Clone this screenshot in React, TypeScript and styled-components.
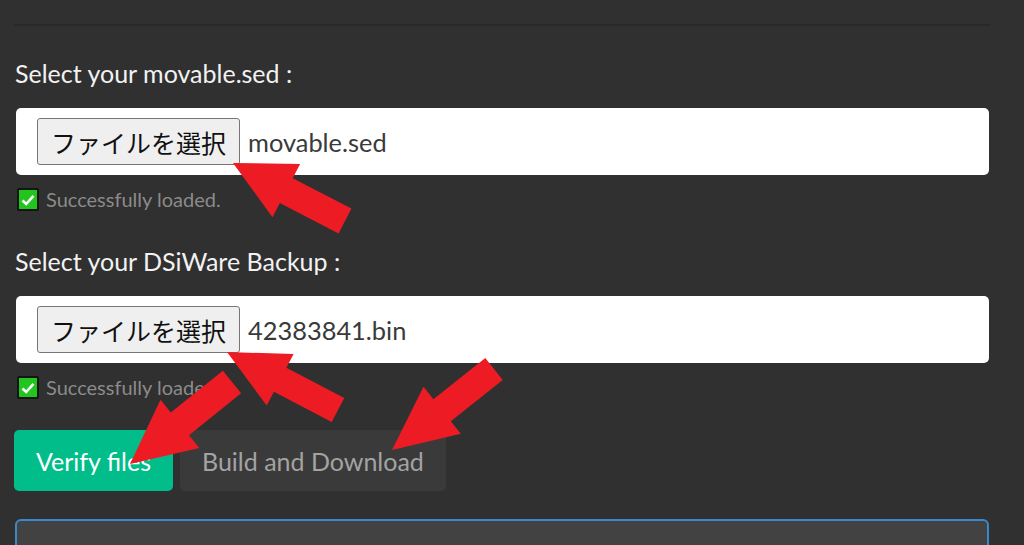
import React from 'react'
import styled, {createGlobalStyle} from 'styled-components'

const GlobalStyle = createGlobalStyle`
  body {
    margin: 0;
    background: #303030;
    font-family: Lato, "Noto Sans", sans-serif;
  }
`

const Page = styled.div`
  position: relative;
  width: 1024px;
  height: 545px;
  overflow: hidden;
  padding-top: 24px;
  box-sizing: border-box;
`

const Container = styled.div`
  width: 976px;
  margin-left: 14px;
  border-top: 2px solid #292929;
  padding-top: 32px;
  display: flex;
  flex-direction: column;
`

const Label = styled.div<{ $top?: number }>`
  font-size: 25px;
  line-height: 30px;
  color: #f2f2f2;
  margin-top: ${p => p.$top || 0}px;
  margin-left: 1px;
`

const FileBox = styled.div`
  margin-top: 20px;
  margin-left: 2px;
  height: 67px;
  width: 973px;
  box-sizing: border-box;
  background: #fff;
  border-radius: 5px;
  display: flex;
  align-items: center;
  padding-left: 21px;
`

const FileButton = styled.div`
  height: 47px;
  box-sizing: border-box;
  padding: 0 13px;
  display: flex;
  align-items: center;
  background: #efefef;
  border: 1px solid #767676;
  border-radius: 3px;
  font-family: "Noto Sans CJK JP", sans-serif;
  font-size: 25px;
  color: #111;
`

const FileName = styled.span`
  margin-left: 8px;
  font-size: 25.4px;
  color: #3a3a3a;
`

const Status = styled.div`
  margin-top: 13px;
  margin-left: 3px;
  display: flex;
  align-items: center;
  gap: 7px;
  font-size: 20px;
  line-height: 23px;
  color: #8b8b8b;
`

const Check = styled.div`
  width: 22px;
  height: 23px;
  box-sizing: border-box;
  background: #22c41e;
  border: 2px solid #141414;
  border-radius: 2px;
  display: flex;
  align-items: center;
  justify-content: center;
`

const Actions = styled.div`
  margin-top: 31px;
  display: flex;
  gap: 7px;
`

const Button = styled.div<{ $primary?: boolean }>`
  height: 61px;
  padding: 0 22px;
  display: flex;
  align-items: center;
  border-radius: 5px;
  font-size: 25px;
  background: ${p => (p.$primary ? '#00bd8a' : '#3a3a3a')};
  color: ${p => (p.$primary ? '#ffffff' : '#a3a3a3')};
`

const Panel = styled.div`
  margin-top: 28px;
  margin-left: 1px;
  width: 974px;
  height: 80px;
  box-sizing: border-box;
  background: #424242;
  border: 2px solid #3a88cc;
  border-radius: 6px;
`

const Overlay = styled.svg`
  position: absolute;
  left: 0;
  top: 0;
  pointer-events: none;
`

type Pt = [number, number]

const arrowPoints = (tip: Pt, tail: Pt, shaft: number, head: number, headLen: number) => {
    const dx = tail[0] - tip[0]
    const dy = tail[1] - tip[1]
    const len = Math.hypot(dx, dy)
    const ux = dx / len, uy = dy / len
    const px = -uy, py = ux
    const bx = tip[0] + ux * headLen, by = tip[1] + uy * headLen
    const pts: Pt[] = [
        tip,
        [bx + px * head / 2, by + py * head / 2],
        [bx + px * shaft / 2, by + py * shaft / 2],
        [tail[0] + px * shaft / 2, tail[1] + py * shaft / 2],
        [tail[0] - px * shaft / 2, tail[1] - py * shaft / 2],
        [bx - px * shaft / 2, by - py * shaft / 2],
        [bx - px * head / 2, by - py * head / 2],
    ]
    return pts.map(p => p[0].toFixed(1) + ',' + p[1].toFixed(1)).join(' ')
}

const arrows: { tip: Pt, tail: Pt, shaft: number, head: number, len: number }[] = [
    {tip: [233, 163], tail: [345, 221], shaft: 28, head: 60, len: 60},
    {tip: [227, 352], tail: [338, 410], shaft: 27, head: 58, len: 60},
    {tip: [130, 464], tail: [232, 382], shaft: 29, head: 62, len: 64},
    {tip: [392, 450], tail: [494, 369], shaft: 28, head: 60, len: 64},
]

const Loaded = () => <Status>
    <Check>
        <svg width="14" height="12" viewBox="0 0 14 12">
            <path d="M1.5 6.5 L5.2 10 L12.5 1.8" fill="none" stroke="#fff" strokeWidth="2.6"/>
        </svg>
    </Check>
    Successfully loaded.
</Status>

const FilePicker = ({name}: { name: string }) => <FileBox>
    <FileButton>ファイルを選択</FileButton>
    <FileName>{name}</FileName>
</FileBox>

export default function App() {
    return <Page>
        <GlobalStyle/>
        <Container>
            <Label>Select your movable.sed :</Label>
            <FilePicker name="movable.sed"/>
            <Loaded/>
            <Label $top={35}>Select your DSiWare Backup :</Label>
            <FilePicker name="42383841.bin"/>
            <Loaded/>
            <Actions>
                <Button $primary>Verify files</Button>
                <Button>Build and Download</Button>
            </Actions>
            <Panel/>
        </Container>
        <Overlay width="1024" height="545">
            {arrows.map((a, i) =>
                <polygon key={i} points={arrowPoints(a.tip, a.tail, a.shaft, a.head, a.len)} fill="#ed1c24"/>
            )}
        </Overlay>
    </Page>
}
